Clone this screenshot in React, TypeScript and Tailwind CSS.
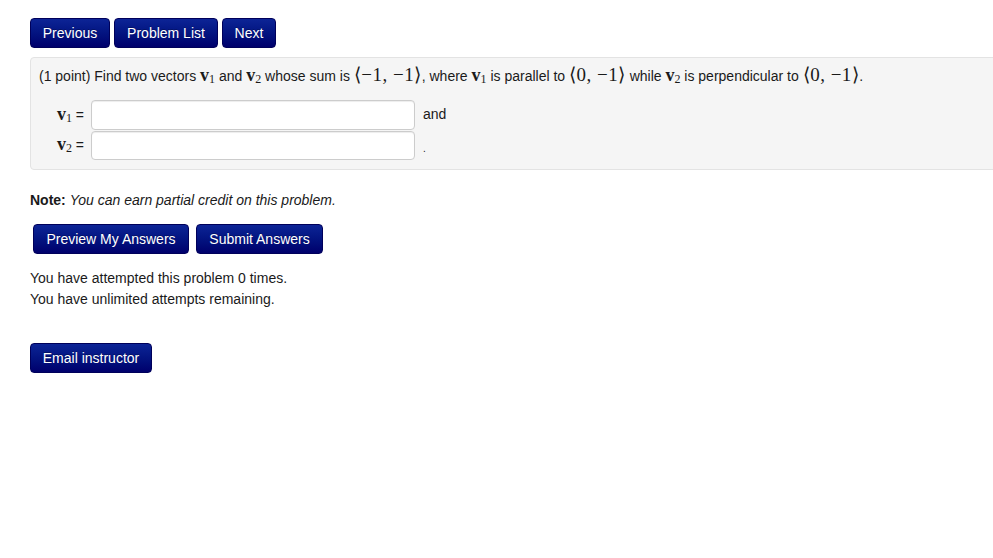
import React from "react";

const btn =
  "h-[30px] rounded-[4px] border border-[#00005a] bg-gradient-to-b from-[#0d2496] to-[#00006c] text-white text-[14px] leading-none whitespace-nowrap flex items-center justify-center [text-shadow:0_-1px_0_rgba(0,0,0,0.25)]";

function V({ n }: { n: string }) {
  return (
    <span className="font-['Liberation_Serif',serif] text-[18px] leading-none">
      <b>v</b>
      <sub className="text-[12px] leading-none relative top-[2px] align-baseline">{n}</sub>
    </span>
  );
}

function Vec({ a, b }: { a: string; b: string }) {
  return (
    <span className="font-['Liberation_Serif',serif] text-[19px] leading-none tracking-[0.5px]">
      ⟨{a},&nbsp;{b}⟩
    </span>
  );
}

export default function App() {
  return (
    <div className="w-[993px] h-[558px] overflow-hidden bg-white font-['Liberation_Sans',Arial,sans-serif] text-[14px] text-[#1a1a1a]">
      <div className="pl-[30px] pt-[18px]">
        <div className="flex gap-[4px]">
          <button className={btn + " w-[80px]"}>Previous</button>
          <button className={btn + " w-[104px]"}>Problem List</button>
          <button className={btn + " w-[54px]"}>Next</button>
        </div>

        <div className="mt-[9px] w-[990px] border border-[#e3e3e3] bg-[#f5f5f5] rounded-[4px] pl-[8px] pt-[7px] pb-[9px]">
          <div className="h-[22px] leading-[22px]">
            (1 point) Find two vectors <V n="1" /> and <V n="2" /> whose sum is{" "}
            <Vec a="−1" b="−1" />, where <V n="1" /> is parallel to <Vec a="0" b="−1" /> while{" "}
            <V n="2" /> is perpendicular to <Vec a="0" b="−1" />.
          </div>
          <div className="mt-[13px] flex flex-col gap-[1px]">
            <div className="flex items-center h-[30px]">
              <div className="w-[51px] text-right pr-[6px] whitespace-nowrap">
                <V n="1" /> =
              </div>
              <input className="ml-[1px] w-[324px] h-[30px] bg-white border border-[#cccccc] rounded-[4px] shadow-[inset_0_1px_1px_rgba(0,0,0,0.075)]" />
              <span className="ml-[8px] self-start mt-[4px]">and</span>
            </div>
            <div className="flex items-center h-[29px]">
              <div className="w-[51px] text-right pr-[6px] whitespace-nowrap">
                <V n="2" /> =
              </div>
              <input className="ml-[1px] w-[324px] h-[29px] bg-white border border-[#cccccc] rounded-[4px] shadow-[inset_0_1px_1px_rgba(0,0,0,0.075)]" />
              <span className="ml-[8px] text-[10px] mt-[6px]">.</span>
            </div>
          </div>
        </div>

        <div className="mt-[20px] leading-[20px]">
          <b>Note:</b> <i>You can earn partial credit on this problem.</i>
        </div>

        <div className="mt-[14px] ml-[3px] flex gap-[7px]">
          <button className={btn + " w-[156px]"}>Preview My Answers</button>
          <button className={btn + " w-[127px]"}>Submit Answers</button>
        </div>

        <div className="mt-[14px] leading-[21px]">
          <div>You have attempted this problem 0 times.</div>
          <div>You have unlimited attempts remaining.</div>
        </div>

        <div className="mt-[33px]">
          <button className={btn + " w-[122px]"}>Email instructor</button>
        </div>
      </div>
    </div>
  );
}
